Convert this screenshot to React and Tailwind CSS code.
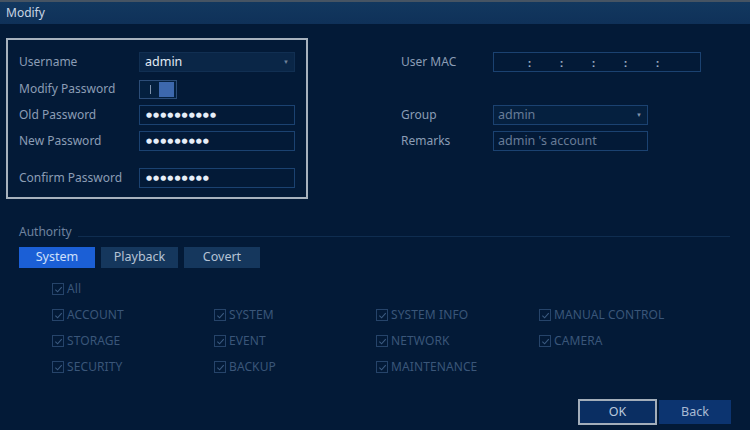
import React from "react";

const font = { fontFamily: '"Noto Sans", "Open Sans", sans-serif' };

function Check({ label }) {
  return (
    <div className="flex items-center h-[16px]">
      <span className="w-[12px] h-[12px] border border-[#26446a] flex items-center justify-center mr-[3px]">
        <svg width="9" height="9" viewBox="0 0 10 10">
          <path d="M1.5 5.2 L4 7.6 L8.6 2.4" fill="none" stroke="#3b5a80" strokeWidth="1.2" />
        </svg>
      </span>
      <span className="text-[12px] text-[#3a5679] leading-none tracking-[0.1px]">{label}</span>
    </div>
  );
}

function Dots({ n }) {
  return (
    <span className="text-[7px] leading-none tracking-[1px] text-[#e6eef8]" style={{ fontFamily: '"DejaVu Sans", sans-serif' }}>
      {"●".repeat(n)}
    </span>
  );
}

function Label({ children, w = "w-[120px]" }) {
  return <span className={`${w} text-[12px] text-[#8b9db5] leading-none`}>{children}</span>;
}

export default function App() {
  return (
    <div className="w-[750px] h-[430px] bg-[#031a37] flex flex-col overflow-hidden" style={font}>
      {/* title bar */}
      <div className="h-[24px] border-t-2 border-[#465463] bg-gradient-to-b from-[#12385f] to-[#0f3159] flex items-center pl-[6px]">
        <span className="text-[12px] text-[#c9d5e4] leading-none">Modify</span>
      </div>

      {/* top section */}
      <div className="flex mt-[14px]">
        <div className="ml-[6px] w-[302px] h-[161px] border-2 border-[#a7b2be] flex flex-col pl-[11px] pt-[12px]">
          <div className="flex items-center h-[20px]">
            <Label>Username</Label>
            <div className="w-[156px] h-[20px] bg-[#0a2647] border border-[#112f52] flex items-center justify-between pl-[5px] pr-[5px]">
              <span className="text-[12.5px] text-[#e2ebf5] leading-none">admin</span>
              <span className="text-[6px] text-[#6f819a]">▼</span>
            </div>
          </div>
          <div className="flex items-center h-[20px] mt-[7px]">
            <Label>Modify Password</Label>
            <div className="w-[38px] h-[19px] border border-[#2c4d78] bg-[#04203f] flex items-center p-[2px]">
              <div className="flex-1 flex items-center justify-center">
                <span className="w-[1px] h-[9px] bg-[#7f93ad]" />
              </div>
              <div className="w-[15px] h-[15px] bg-[#3d68ad]" />
            </div>
          </div>
          <div className="flex items-center h-[20px] mt-[6px]">
            <Label>Old Password</Label>
            <div className="w-[156px] h-[20px] border border-[#1b4271] bg-[#031a37] flex items-center pl-[6px]">
              <Dots n={10} />
            </div>
          </div>
          <div className="flex items-center h-[20px] mt-[6px]">
            <Label>New Password</Label>
            <div className="w-[156px] h-[20px] border border-[#1b4271] bg-[#031a37] flex items-center pl-[6px]">
              <Dots n={9} />
            </div>
          </div>
          <div className="flex items-center h-[20px] mt-[17px]">
            <Label>Confirm Password</Label>
            <div className="w-[156px] h-[20px] border border-[#1b4271] bg-[#031a37] flex items-center pl-[6px]">
              <Dots n={9} />
            </div>
          </div>
        </div>

        {/* right column */}
        <div className="ml-[93px] flex flex-col pt-[14px]">
          <div className="flex items-center h-[20px]">
            <Label w="w-[92px]">User MAC</Label>
            <div className="w-[208px] h-[20px] border border-[#1b4271] flex items-center pl-[34px]">
              {[0, 1, 2, 3, 4].map((i) => (
                <span key={i} className="w-[32px] text-[11px] text-[#9fb0c6] leading-none font-bold">:</span>
              ))}
            </div>
          </div>
          <div className="flex items-center h-[20px] mt-[33px]">
            <Label w="w-[92px]">Group</Label>
            <div className="w-[155px] h-[20px] border border-[#1b4271] bg-[#05203f] flex items-center justify-between pl-[4px] pr-[5px]">
              <span className="text-[12.5px] text-[#687c97] leading-none">admin</span>
              <span className="text-[6px] text-[#8193ab]">▼</span>
            </div>
          </div>
          <div className="flex items-center h-[20px] mt-[6px]">
            <Label w="w-[92px]">Remarks</Label>
            <div className="w-[155px] h-[20px] border border-[#1b4271] flex items-center pl-[4px]">
              <span className="text-[12.5px] text-[#687c97] leading-none">admin 's account</span>
            </div>
          </div>
        </div>
      </div>

      {/* authority */}
      <div className="flex items-end mt-[23px] pl-[19px] pr-[20px] h-[16px]">
        <span className="text-[12px] text-[#6f839f] leading-none">Authority</span>
        <div className="flex-1 h-px bg-[#0f2d50] ml-[6px] mb-[1px]" />
      </div>

      <div className="flex mt-[9px] pl-[19px] gap-[5px] h-[21px]">
        <div className="w-[76px] h-[21px] bg-[#1b5fd6] flex items-center justify-center text-[12.5px] text-[#cfe0fb] leading-none">System</div>
        <div className="w-[77px] h-[21px] bg-[#15375d] flex items-center justify-center text-[12.5px] text-[#b5c3d5] leading-none ml-[1px]">Playback</div>
        <div className="w-[76px] h-[21px] bg-[#15375d] flex items-center justify-center text-[12.5px] text-[#b5c3d5] leading-none ml-[1px]">Covert</div>
      </div>

      <div className="pl-[52px] mt-[13px] flex flex-col gap-[10px]">
        <Check label="All" />
        <div className="grid grid-cols-[162px_162px_163px_200px]">
          <Check label="ACCOUNT" />
          <Check label="SYSTEM" />
          <Check label="SYSTEM INFO" />
          <Check label="MANUAL CONTROL" />
        </div>
        <div className="grid grid-cols-[162px_162px_163px_200px]">
          <Check label="STORAGE" />
          <Check label="EVENT" />
          <Check label="NETWORK" />
          <Check label="CAMERA" />
        </div>
        <div className="grid grid-cols-[162px_162px_163px_200px]">
          <Check label="SECURITY" />
          <Check label="BACKUP" />
          <Check label="MAINTENANCE" />
        </div>
      </div>

      <div className="flex justify-end pr-[19px] mt-[24px]">
        <div className="w-[79px] h-[26px] border-2 border-[#a3aeba] bg-[#0a2e62] flex items-center justify-center text-[12.5px] text-[#b9c8dc] leading-none">OK</div>
        <div className="w-[72px] h-[24px] mt-[1px] ml-[2px] bg-[#0c3470] flex items-center justify-center text-[12.5px] text-[#a9bbd3] leading-none">Back</div>
      </div>
    </div>
  );
}
